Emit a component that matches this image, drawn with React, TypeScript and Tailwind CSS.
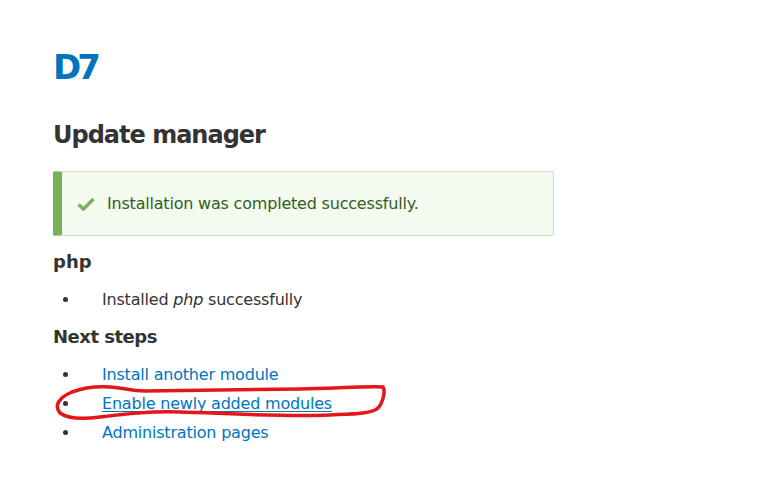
import React from "react";

const font = { fontFamily: '"DejaVu Sans", Verdana, sans-serif' };

function Check() {
  return (
    <svg width="18" height="14" viewBox="0 0 18 14" className="shrink-0">
      <path d="M1.5 7.5 L6.5 12 L16.5 2" fill="none" stroke="#77b259" strokeWidth="3.4" />
    </svg>
  );
}

function Bullet({ children }: { children: React.ReactNode }) {
  return (
    <li className="flex items-center h-[29px]">
      <span className="w-[5px] h-[5px] rounded-full bg-[#333] ml-[10px] mr-[34px]" />
      {children}
    </li>
  );
}

export default function App() {
  return (
    <div className="relative w-[772px] h-[482px] bg-white text-[#333]" style={font}>
      <div className="pl-[53px] pt-[46px]">
        <h1 className="text-[34px] font-bold text-[#0074bd] leading-[42px] tracking-[-4px]">D7</h1>
        <h2 className="mt-[32px] text-[24px] font-bold text-[#333] leading-[30px] tracking-[-1px]">Update manager</h2>

        <div className="mt-[21px] w-[501px] h-[65px] flex items-center gap-[12px] bg-[#f3faef] border border-[#c9e1bd] border-l-[9px] border-l-[#77b259] rounded-[2px] pl-[15px]">
          <Check />
          <span className="text-[16px] text-[#325e1c] tracking-[-0.2px]">Installation was completed successfully.</span>
        </div>

        <h3 className="mt-[13px] text-[18px] font-bold leading-[26px]">php</h3>
        <ul className="mt-[10px] text-[16px] tracking-[-0.2px]">
          <Bullet>
            <span>
              Installed <em>php</em> successfully
            </span>
          </Bullet>
        </ul>

        <h3 className="mt-[10px] text-[18px] font-bold leading-[26px] tracking-[-0.5px]">Next steps</h3>
        <ul className="mt-[10px] text-[16px] text-[#0074bd] tracking-[-0.2px]">
          <Bullet>
            <a href="#">Install another module</a>
          </Bullet>
          <Bullet>
            <a href="#" className="underline underline-offset-2">Enable newly added modules</a>
          </Bullet>
          <Bullet>
            <a href="#">Administration pages</a>
          </Bullet>
        </ul>
      </div>

      <svg className="absolute top-0 left-0 pointer-events-none" width="772" height="482">
        <path
          d="M 72 392 C 80 389, 95 386, 110 387 C 125 388, 130 391, 145 391 L 300 389 C 340 388, 370 386, 383 387 C 386 392, 382 404, 378 408 C 372 414, 350 414, 330 415 C 280 417, 220 413, 180 412 C 150 411, 125 414, 100 417 C 85 419, 68 419, 60 413 C 54 406, 58 398, 72 392"
          fill="none"
          stroke="#e3171b"
          strokeWidth="3.5"
          strokeLinecap="round"
        />
      </svg>
    </div>
  );
}
